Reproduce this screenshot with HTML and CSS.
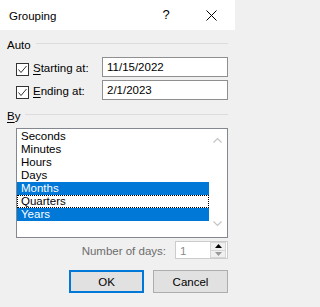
FILE: index.html
```html
<!DOCTYPE html>
<html>
<head>
<meta charset="utf-8">
<link rel="stylesheet" href="styles.css">
</head>
<body>
<div class="dialog">
  <div class="titlebar">
    <span class="title">Grouping</span>
    <span class="help">?</span>
    <svg class="close" width="11" height="11" viewBox="0 0 11 11"><path d="M0.5 0.5L10.5 10.5M10.5 0.5L0.5 10.5" stroke="#000" stroke-width="1" fill="none"/></svg>
  </div>
  <div class="content">
    <div class="group-head"><span>Auto</span><span class="rule"></span></div>
    <div class="auto-rows">
      <div class="row">
        <svg class="check" width="13" height="13" viewBox="0 0 13 13"><rect x="0.5" y="0.5" width="12" height="12" fill="#fff" stroke="#333"/><path d="M2.5 6.5L5 9.5L10.5 3" stroke="#333" stroke-width="1" fill="none"/></svg>
        <span class="label"><u>S</u>tarting at:</span>
        <div class="input">11/15/2022</div>
      </div>
      <div class="row">
        <svg class="check" width="13" height="13" viewBox="0 0 13 13"><rect x="0.5" y="0.5" width="12" height="12" fill="#fff" stroke="#333"/><path d="M2.5 6.5L5 9.5L10.5 3" stroke="#333" stroke-width="1" fill="none"/></svg>
        <span class="label"><u>E</u>nding at:</span>
        <div class="input">2/1/2023</div>
      </div>
    </div>
    <div class="group-head by"><span><u>B</u>y</span><span class="rule"></span></div>
    <div class="listbox">
      <div class="items">
        <div class="item">Seconds</div>
        <div class="item">Minutes</div>
        <div class="item">Hours</div>
        <div class="item">Days</div>
        <div class="item selected">Months</div>
        <div class="item focused">Quarters</div>
        <div class="item selected">Years</div>
      </div>
      <div class="scrollbar">
        <svg width="18" height="8" viewBox="0 0 18 8"><path d="M4.5 6.5L8.5 2.5L12.5 6.5" stroke="#c4c4c4" stroke-width="1.2" fill="none"/></svg>
        <svg width="18" height="8" viewBox="0 0 18 8"><path d="M4.5 1.5L8.5 5.5L12.5 1.5" stroke="#c4c4c4" stroke-width="1.2" fill="none"/></svg>
      </div>
    </div>
    <div class="days-row">
      <span class="days-label">Number of days:</span>
      <div class="spinbox">
        <span class="spin-value">1</span>
        <div class="spin-buttons">
          <div class="spin-btn"><svg width="7" height="4" viewBox="0 0 7 4"><path d="M0 4L3.5 0L7 4Z" fill="#000"/></svg></div>
          <div class="spin-btn"><svg width="7" height="4" viewBox="0 0 7 4"><path d="M0 0L3.5 4L7 0Z" fill="#9a9a9a"/></svg></div>
        </div>
      </div>
    </div>
    <div class="buttons">
      <div class="btn default">OK</div>
      <div class="btn">Cancel</div>
    </div>
  </div>
</div>
</body>
</html>
```
FILE: styles.css
```css
* { box-sizing: border-box; }
html, body { margin: 0; padding: 0; }
body {
  width: 235px;
  height: 307px;
  overflow: hidden;
  background: #f0f0f0;
  font-family: "Liberation Sans", Arial, sans-serif;
  font-size: 11.5px;
  line-height: 16px;
  color: #000;
}
u { text-decoration: underline; text-underline-offset: 2px; }

.titlebar {
  height: 30px;
  background: #fff;
  display: flex;
  align-items: flex-start;
  padding: 8px 0 0 9px;
}
.title { flex: 1; }
.help {
  font-size: 13px;
  line-height: 16px;
  margin-top: -1px;
  margin-right: 36px;
  width: 8px;
  text-align: center;
}
.close { margin-top: 2px; margin-right: 18px; }

.content { padding: 6px 7px 0 7px; }

.group-head {
  display: flex;
  align-items: flex-start;
  gap: 5px;
  height: 16px;
  padding-top: 1px;
}
.rule {
  flex: 1;
  height: 1px;
  margin-top: 6px;
  background: #dcdcdc;
}

.auto-rows {
  padding-left: 9px;
  margin-top: 5px;
  display: flex;
  flex-direction: column;
  gap: 3px;
}
.row {
  display: flex;
  align-items: center;
  height: 20px;
}
.check { align-self: flex-start; margin-top: 6px; flex: none; }
.label { flex: 1; margin-left: 4px; padding-top: 1px; }
.input {
  width: 126px;
  height: 20px;
  border: 1px solid #8f8f8f;
  background: #fff;
  padding-left: 4px;
  padding-top: 1px;
  line-height: 17px;
}

.by { margin-top: 7px; }

.listbox {
  margin-top: 5px;
  margin-left: 9px;
  height: 110px;
  border: 1px solid #828790;
  background: #fff;
  display: flex;
}
.items { flex: 1; padding-top: 1px; }
.item {
  height: 13px;
  line-height: 13px;
  padding-left: 4px;
}
.item.selected { background: #0078d7; color: #fff; }
.item.focused { outline: 1px dotted #000; outline-offset: -1px; }
.scrollbar {
  width: 18px;
  display: flex;
  flex-direction: column;
  justify-content: space-between;
  padding: 7px 0 9px 0;
}
.scrollbar svg { display: block; }

.days-row {
  margin-top: 3px;
  display: flex;
  justify-content: flex-end;
  align-items: center;
  height: 18px;
}
.days-label { color: #6d6d6d; margin-right: 9px; padding-top: 1px; }
.spinbox {
  width: 53px;
  height: 18px;
  border: 1px solid #cccccc;
  background: #fff;
  display: flex;
  align-items: center;
}
.spin-value { flex: 1; color: #8a8a8a; padding-left: 4px; padding-top: 1px; }
.spin-buttons {
  width: 16px;
  height: 16px;
  display: flex;
  flex-direction: column;
  margin-right: 1px;
}
.spin-btn {
  flex: 1;
  display: flex;
  align-items: center;
  justify-content: center;
  background: #f0f0f0;
  border: 1px solid #d6d6d6;
}
.spin-btn + .spin-btn { border-top: none; }
.spin-btn svg { display: block; }

.buttons {
  margin-top: 11px;
  display: flex;
  justify-content: flex-end;
  gap: 9px;
}
.btn {
  width: 75px;
  height: 23px;
  background: #e1e1e1;
  border: 1px solid #adadad;
  display: flex;
  align-items: center;
  justify-content: center;
}
.btn.default { border: 2px solid #0078d7; }
```
